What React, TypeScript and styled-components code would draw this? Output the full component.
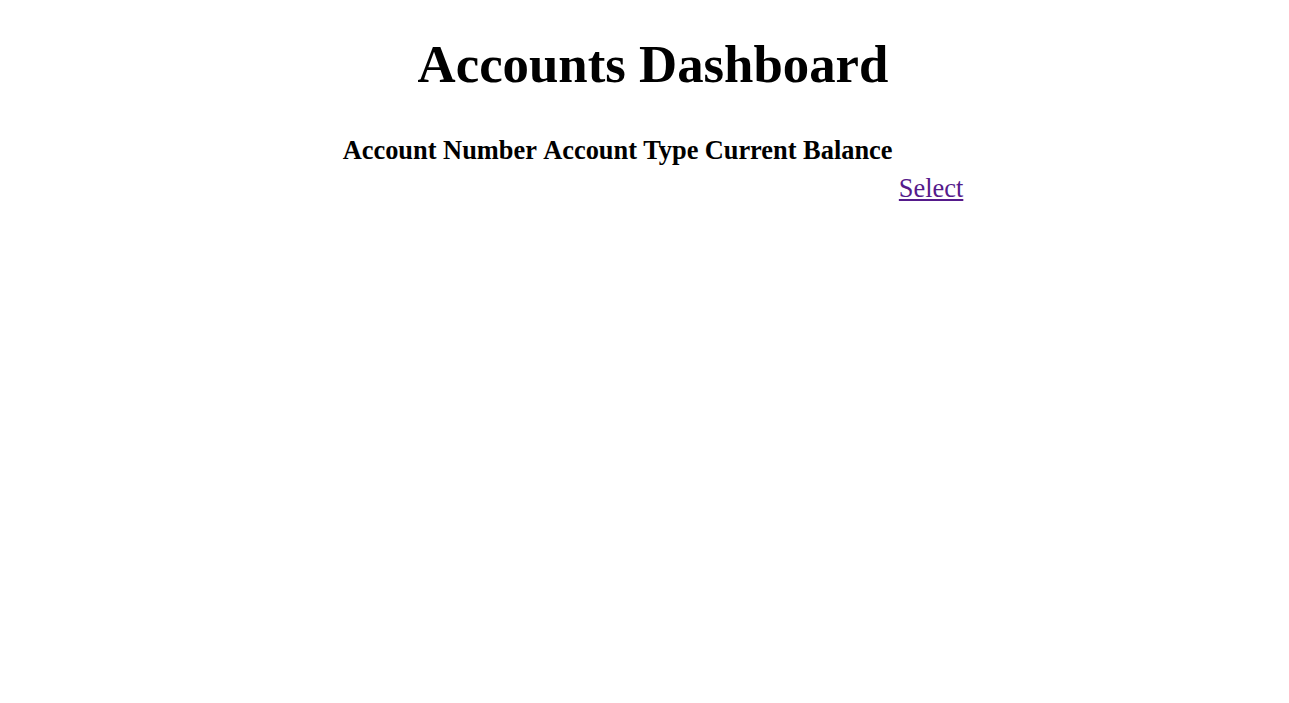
import React from "react";
import styled, { createGlobalStyle } from "styled-components";

const GlobalStyle = createGlobalStyle`
  html, body {
    margin: 0;
    padding: 0;
    background: #ffffff;
  }
  body {
    font-family: "Liberation Serif", "Times New Roman", serif;
    color: #000000;
  }
`;

const Page = styled.div`
  padding: 34px 13px 0 30px;
`;

const Title = styled.h1`
  margin: 0 0 36px 0;
  font-size: 52.8px;
  font-weight: 700;
  text-align: center;
`;

const AccountsTable = styled.table`
  margin: 0 auto;
  border-collapse: separate;
  border-spacing: 3.3px;
  font-size: 26.4px;
`;

const HeaderCell = styled.th`
  padding: 1.65px;
  font-weight: 700;
  text-align: center;
`;

const Cell = styled.td`
  padding: 2.4px 1.65px 1.65px;
`;

const SelectLink = styled.a`
  color: #551a8b;
  text-decoration: underline;
  cursor: pointer;
`;

const accounts = [{ number: "", type: "", balance: "" }];

function App() {
  return (
    <>
      <GlobalStyle />
      <Page>
        <Title>Accounts Dashboard</Title>
        <AccountsTable>
          <thead>
            <tr>
              <HeaderCell>Account Number</HeaderCell>
              <HeaderCell>Account Type</HeaderCell>
              <HeaderCell>Current Balance</HeaderCell>
              <HeaderCell />
            </tr>
          </thead>
          <tbody>
            {accounts.map((account, i) => (
              <tr key={i}>
                <Cell>{account.number}</Cell>
                <Cell>{account.type}</Cell>
                <Cell>{account.balance}</Cell>
                <Cell>
                  <SelectLink href="#">Select</SelectLink>
                </Cell>
              </tr>
            ))}
          </tbody>
        </AccountsTable>
      </Page>
    </>
  );
}

export default App;
